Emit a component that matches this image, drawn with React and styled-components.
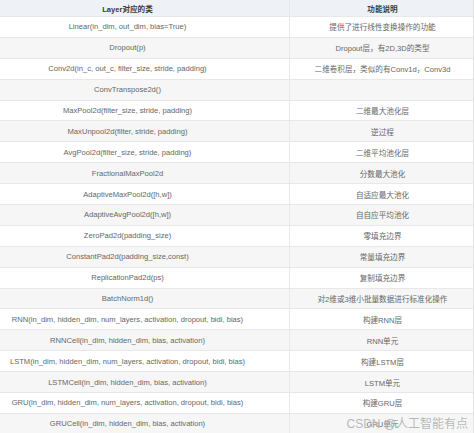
import React from 'react';
import styled, { createGlobalStyle } from 'styled-components';

const GlobalStyle = createGlobalStyle`
  html, body {
    margin: 0;
    padding: 0;
    background: #ffffff;
  }
  body {
    font-family: "Liberation Sans", Arial, "Noto Sans CJK SC", sans-serif;
  }
`;

const rows = [
  ['Linear(in_dim, out_dim, bias=True)', '提供了进行线性变换操作的功能'],
  ['Dropout(p)', 'Dropout层，有2D,3D的类型'],
  ['Conv2d(in_c, out_c, filter_size, stride, padding)', '二维卷积层，类似的有Conv1d，Conv3d'],
  ['ConvTranspose2d()', ''],
  ['MaxPool2d(filter_size, stride, padding)', '二维最大池化层'],
  ['MaxUnpool2d(filter, stride, padding)', '逆过程'],
  ['AvgPool2d(filter_size, stride, padding)', '二维平均池化层'],
  ['FractionalMaxPool2d', '分数最大池化'],
  ['AdaptiveMaxPool2d([h,w])', '自适应最大池化'],
  ['AdaptiveAvgPool2d([h,w])', '自自应平均池化'],
  ['ZeroPad2d(padding_size)', '零填充边界'],
  ['ConstantPad2d(padding_size,const)', '常量填充边界'],
  ['ReplicationPad2d(ps)', '复制填充边界'],
  ['BatchNorm1d()', '对2维或3维小批量数据进行标准化操作'],
  ['RNN(in_dim, hidden_dim, num_layers, activation, dropout, bidi, bias)', '构建RNN层'],
  ['RNNCell(in_dim, hidden_dim, bias, activation)', 'RNN单元'],
  ['LSTM(in_dim, hidden_dim, num_layers, activation, dropout, bidi, bias)', '构建LSTM层'],
  ['LSTMCell(in_dim, hidden_dim, bias, activation)', 'LSTM单元'],
  ['GRU(in_dim, hidden_dim, num_layers, activation, dropout, bidi, bias)', '构建GRU层'],
  ['GRUCell(in_dim, hidden_dim, bias, activation)', 'GRU单元'],
];

export default function App() {
  return (
    <Page>
      <GlobalStyle />
      <Table>
        <Row $head>
          <LayerCell $head>Layer对应的类</LayerCell>
          <InfoCell $head>功能说明</InfoCell>
        </Row>
        {rows.map(([layer, info], i) => (
          <Row key={layer} $striped={i % 2 === 1}>
            <LayerCell>{layer}</LayerCell>
            <InfoCell>{info}</InfoCell>
          </Row>
        ))}
      </Table>
      {/* site watermark sits over the last row, as in the screenshot */}
      <Watermark>CSDN @人工智能有点</Watermark>
    </Page>
  );
}

const Page = styled.div`
  position: relative;
  width: 474px;
  height: 433px;
  overflow: hidden;
`;

const Table = styled.div`
  display: flex;
  flex-direction: column;
  width: 474px;
  box-sizing: border-box;
  border-right: 1px solid #e2e2e2;
`;

const Row = styled.div`
  display: grid;
  grid-template-columns: 290px 1fr;
  height: ${(p) => (p.$head ? '17px' : '20.9px')};
  box-sizing: border-box;
  border-bottom: 1px solid #e8e8e8;
  background: ${(p) => (p.$head ? '#eef2f6' : p.$striped ? '#f6f6f6' : '#ffffff')};
`;

const Cell = styled.div`
  display: flex;
  align-items: center;
  justify-content: center;
  font-size: 7.6px;
  white-space: nowrap;
  color: ${(p) => (p.$head ? '#3a3a3a' : '#666666')};
  font-weight: ${(p) => (p.$head ? 700 : 400)};
`;

const LayerCell = styled(Cell)`
  padding-right: 34px;
  border-right: 1px solid #e8e8e8;
`;

const InfoCell = styled(Cell)`
  padding-left: 2px;
`;

const Watermark = styled.div`
  position: absolute;
  right: 6px;
  top: 414px;
  font-size: 12px;
  color: rgba(150, 150, 150, 0.7);
  text-shadow: 0 0 1px rgba(255, 255, 255, 0.8);
  white-space: nowrap;
`;
